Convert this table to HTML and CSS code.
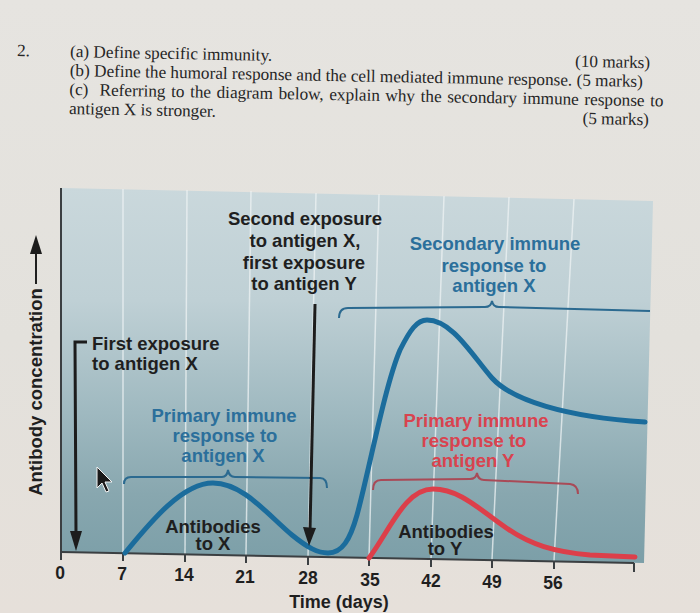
FILE: index.html
```html
<!DOCTYPE html>
<html>
<head>
<meta charset="utf-8">
<title>Immune response question</title>
<link rel="stylesheet" href="styles.css">
</head>
<body>
<div class="page">
  <section class="question">
    <div class="qnum">2.</div>
    <div class="qbody">
      <div class="line split"><span>(a) Define specific immunity.</span><span class="marks">(10 marks)</span></div>
      <div class="line">(b) Define the humoral response and the cell mediated immune response. (5 marks)</div>
      <div class="line justified">(c)&nbsp; Referring to the diagram below, explain why the secondary immune response to</div>
      <div class="line split"><span>antigen X is stronger.</span><span class="marks">(5 marks)</span></div>
    </div>
  </section>
  <figure class="chart">
    <svg class="chart-svg" width="700" height="443" viewBox="0 170 700 443" xmlns="http://www.w3.org/2000/svg">
      <defs>
        <linearGradient id="plotbg" x1="0" y1="188" x2="0" y2="562" gradientUnits="userSpaceOnUse">
          <stop offset="0" stop-color="#cad8dc"/>
          <stop offset="0.3" stop-color="#bfd0d5"/>
          <stop offset="0.6" stop-color="#9fb9c0"/>
          <stop offset="0.82" stop-color="#88a7af"/>
          <stop offset="1" stop-color="#7c9fa8"/>
        </linearGradient>
      </defs>
      <!-- plot background -->
      <polygon points="61,188 653,201 644,563 61,552" fill="url(#plotbg)"/>
      <!-- grid lines -->
      <g class="grid">
        <line x1="123" y1="189" x2="123" y2="553"/>
        <line x1="187" y1="190" x2="185" y2="554"/>
        <line x1="251" y1="191" x2="246" y2="555"/>
        <line x1="316" y1="193" x2="308" y2="557"/>
        <line x1="379" y1="194" x2="369" y2="558"/>
        <line x1="444" y1="196" x2="431" y2="559"/>
        <line x1="509" y1="197" x2="492" y2="560"/>
        <line x1="574" y1="199" x2="554" y2="561"/>
      </g>
      <!-- axes -->
      <g class="axis">
        <line x1="61" y1="188" x2="61" y2="560"/>
        <line x1="61" y1="552" x2="634" y2="563"/>
        <line x1="123" y1="553" x2="123" y2="561"/>
        <line x1="185" y1="554" x2="185" y2="562"/>
        <line x1="246" y1="555" x2="246" y2="563"/>
        <line x1="308" y1="557" x2="308" y2="565"/>
        <line x1="369" y1="558" x2="369" y2="566"/>
        <line x1="431" y1="559" x2="431" y2="567"/>
        <line x1="492" y1="560" x2="492" y2="568"/>
        <line x1="554" y1="561" x2="554" y2="569"/>
        <line x1="634" y1="563" x2="634" y2="572"/>
      </g>
      <!-- y axis label -->
      <text class="lbl" x="42" y="392" text-anchor="middle" transform="rotate(-90 42 392)">Antibody concentration</text>
      <line class="ink" x1="36" y1="284" x2="36" y2="250" stroke-width="2"/>
      <polygon class="ink-fill" points="30,254 42,254 36,235"/>
      <!-- brackets -->
      <path class="brace-blue" d="M339,318 Q339,308 348,308 L485,307 Q491,307 492,301 Q493,307 499,307 L650,311"/>
      <path class="brace-blue" d="M124,484 Q124,477 131,477 L222,477 Q227,477 228,470 Q229,477 235,477 L320,478 Q327,478 327,488"/>
      <path class="brace-red" d="M373,490 Q373,480 381,480 L470,479 Q476,479 477,473 Q478,480 484,480 L570,484 Q578,485 578,494"/>
      <!-- curves -->
      <path class="curve-blue" d="M125,553 C152,520 183,483 213,483 C243,483 268,515 292,535 C308,548 318,553 328,553 C342,553 350,540 357,515 C368,475 385,385 400,350 C410,330 417,320 427,320 C452,320 472,355 492,378 C512,400 565,417 645,422"/>
      <path class="curve-red" d="M369,558 C390,530 405,489 433,489 C460,489 480,510 505,527 C530,545 555,552 590,555 L635,557"/>
      <!-- exposure arrows -->
      <path class="ink-line" d="M87,342 L75,342 L76,534"/>
      <polygon class="ink-fill" points="70,531 82,531 76,551"/>
      <line class="ink-line" x1="315" y1="304" x2="310" y2="530"/>
      <polygon class="ink-fill" points="303,527 316,528 309,546"/>
      <!-- cursor -->
      <path class="cursor" d="M97,467 L97,488 L102,483 L106,492 L109,491 L105,482 L112,482 Z"/>
      <!-- labels -->
      <text class="lbl" x="305" y="225" text-anchor="middle">Second exposure</text>
      <text class="lbl" x="305" y="247" text-anchor="middle">to antigen X,</text>
      <text class="lbl" x="304" y="269" text-anchor="middle">first exposure</text>
      <text class="lbl" x="304" y="290" text-anchor="middle">to antigen Y</text>

      <text class="lbl blue" x="495" y="250" text-anchor="middle">Secondary immune</text>
      <text class="lbl blue" x="494" y="272" text-anchor="middle">response to</text>
      <text class="lbl blue" x="494" y="292" text-anchor="middle">antigen X</text>

      <text class="lbl" x="92" y="350">First exposure</text>
      <text class="lbl" x="92" y="370">to antigen X</text>

      <text class="lbl blue" x="224" y="422" text-anchor="middle">Primary immune</text>
      <text class="lbl blue" x="225" y="442" text-anchor="middle">response to</text>
      <text class="lbl blue" x="223" y="462" text-anchor="middle">antigen X</text>

      <text class="lbl red" x="476" y="427" text-anchor="middle">Primary immune</text>
      <text class="lbl red" x="474" y="447" text-anchor="middle">response to</text>
      <text class="lbl red" x="473" y="467" text-anchor="middle">antigen Y</text>

      <text class="lbl" x="213" y="533" text-anchor="middle">Antibodies</text>
      <text class="lbl" x="213" y="550" text-anchor="middle">to X</text>
      <text class="lbl" x="446" y="538" text-anchor="middle">Antibodies</text>
      <text class="lbl" x="445" y="555" text-anchor="middle">to Y</text>

      <g class="ticks">
        <text x="60" y="579">0</text>
        <text x="122" y="580">7</text>
        <text x="184" y="581">14</text>
        <text x="245" y="583">21</text>
        <text x="308" y="584">28</text>
        <text x="370" y="586">35</text>
        <text x="431" y="587">42</text>
        <text x="492" y="588">49</text>
        <text x="553" y="589">56</text>
      </g>
      <text class="lbl time" x="339" y="608" text-anchor="middle">Time (days)</text>
    </svg>
  </figure>
</div>
</body>
</html>
```
FILE: styles.css
```css
html, body {
  margin: 0;
  padding: 0;
}
body {
  background: #e4e2dd;
}
.page {
  width: 700px;
  height: 613px;
  overflow: hidden;
  background: linear-gradient(180deg, #e6e4e0 0%, #e3e1dc 55%, #e6e0da 100%);
}
.question {
  height: 170px;
  box-sizing: border-box;
  padding-top: 42px;
  display: flex;
  font-family: "Liberation Serif", "Times New Roman", serif;
  font-size: 17.2px;
  line-height: 19px;
  color: #262626;
  transform: rotate(1.1deg);
  transform-origin: 70px 57px;
}
.qnum {
  flex: 0 0 70px;
  box-sizing: border-box;
  padding-left: 17px;
}
.qbody {
  width: 595px;
}
.line {
  white-space: nowrap;
}
.justified {
  word-spacing: 1.3px;
}
.split {
  display: flex;
  justify-content: space-between;
  padding-right: 15px;
}
.chart {
  margin: 0;
}
.chart-svg {
  display: block;
}
.grid line {
  stroke: #eef3f4;
  stroke-width: 1.5;
  opacity: 0.75;
}
.axis line {
  stroke: #3b3f42;
  stroke-width: 2;
}
.lbl {
  font-family: "Liberation Sans", Arial, sans-serif;
  font-weight: bold;
  font-size: 18.5px;
  fill: #1f1f1f;
}
.lbl.blue {
  fill: #2b6f9b;
}
.lbl.red {
  fill: #d9434f;
}
.lbl.time {
  font-size: 18px;
}
.ticks text {
  font-family: "Liberation Sans", Arial, sans-serif;
  font-weight: bold;
  font-size: 17.5px;
  fill: #1f1f1f;
  text-anchor: middle;
}
.ink {
  stroke: #1f1f1f;
}
.ink-line {
  fill: none;
  stroke: #1c1c1c;
  stroke-width: 3;
}
.ink-fill {
  fill: #1c1c1c;
}
.brace-blue {
  fill: none;
  stroke: #2b6a90;
  stroke-width: 2;
}
.brace-red {
  fill: none;
  stroke: #a94a57;
  stroke-width: 2;
}
.curve-blue {
  fill: none;
  stroke: #1b6c9c;
  stroke-width: 5;
  stroke-linecap: round;
}
.curve-red {
  fill: none;
  stroke: #dc3f4a;
  stroke-width: 5;
  stroke-linecap: round;
}
.cursor {
  fill: #1a1a1a;
  stroke: #f4f4f4;
  stroke-width: 1;
}
```
